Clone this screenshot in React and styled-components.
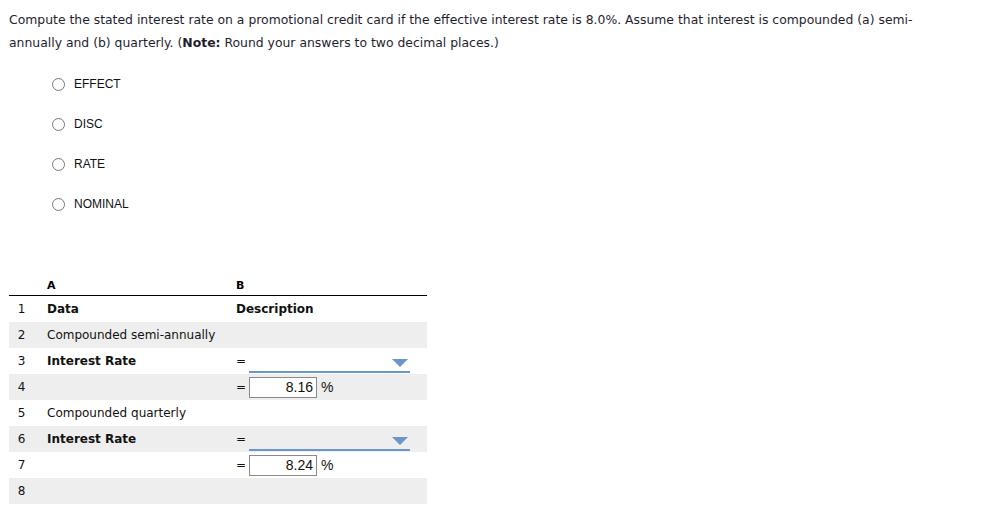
import React from 'react';
import styled, { createGlobalStyle } from 'styled-components';

const GlobalStyle = createGlobalStyle`
  html, body {
    margin: 0;
    padding: 0;
    background: #fff;
  }
  body {
    font-family: "DejaVu Sans", Verdana, sans-serif;
    font-size: 13px;
    color: #222;
  }
`;

const Page = styled.div`
  padding: 8px 9px;
  width: 980px;
  box-sizing: border-box;
`;

const Question = styled.p`
  margin: 0;
  max-width: 916px;
  font-size: 12.4px;
  line-height: 23px;
  color: #1e1e2e;
`;

const Options = styled.div`
  display: flex;
  flex-direction: column;
  gap: 20px;
  padding: 20px 0 0 43px;
`;

const Option = styled.label`
  display: flex;
  align-items: center;
  gap: 9px;
  height: 20px;
  font-family: "Liberation Sans", Arial, sans-serif;
  font-size: 12px;
  color: #111;
`;

const Radio = styled.span`
  width: 11px;
  height: 11px;
  border: 1px solid #767676;
  border-radius: 50%;
  background: #fff;
`;

const Sheet = styled.div`
  margin-top: 61px;
  width: 418px;
  display: grid;
  grid-template-columns: 38px 189px 1fr;
`;

const HeadCell = styled.div`
  height: 20px;
  display: flex;
  align-items: center;
  font-weight: bold;
  font-size: 11px;
  border-bottom: 1px solid #000;
  color: #000;
`;

const Row = styled.div`
  display: contents;
  & > div {
    background: ${p => (p.$shade ? '#eeeeee' : '#fff')};
  }
`;

const Cell = styled.div`
  height: 26px;
  display: flex;
  align-items: center;
  font-weight: ${p => (p.$bold ? 'bold' : 'normal')};
  font-size: 12px;
  color: #111;
`;

const Num = styled(Cell)`
  justify-content: center;
  padding-right: 13px;
  font-size: 12px;
`;

const Eq = styled.span`
  width: 13px;
  font-size: 12px;
  font-weight: normal;
`;

const Select = styled.div`
  width: 161px;
  height: 16px;
  margin-top: 7px;
  border-bottom: 2px solid #6a96c8;
  display: flex;
  justify-content: flex-end;
  align-items: center;
  padding-right: 2px;
  box-sizing: border-box;
`;

const Arrow = () => (
  <svg width="16" height="9" viewBox="0 0 16 9">
    <polygon points="0,0 16,0 8,8" fill="#6a96c8" />
  </svg>
);

const Input = styled.div`
  width: 68px;
  height: 21px;
  box-sizing: border-box;
  border: 1px solid #8a8a8a;
  background: #fff;
  display: flex;
  align-items: center;
  justify-content: flex-end;
  padding-right: 3px;
  font-family: "Liberation Sans", Arial, sans-serif;
  font-size: 14px;
  color: #111;
`;

const Unit = styled.span`
  margin-left: 4px;
  font-family: "Liberation Sans", Arial, sans-serif;
  font-size: 14px;
`;

const options = ['EFFECT', 'DISC', 'RATE', 'NOMINAL'];

const rows = [
  { n: 1, a: 'Data', b: 'Description', bold: true },
  { n: 2, a: 'Compounded semi-annually' },
  { n: 3, a: 'Interest Rate', bold: true, select: true },
  { n: 4, value: '8.16' },
  { n: 5, a: 'Compounded quarterly' },
  { n: 6, a: 'Interest Rate', bold: true, select: true },
  { n: 7, value: '8.24' },
  { n: 8 },
];

export default function App() {
  return (
    <Page>
      <GlobalStyle />
      <Question>
        Compute the stated interest rate on a promotional credit card if the effective interest rate is 8.0%. Assume that interest is compounded (a) semi-annually and (b) quarterly. (<b>Note:</b> Round your answers to two decimal places.)
      </Question>
      <Options>
        {options.map(o => (
          <Option key={o}>
            <Radio />
            {o}
          </Option>
        ))}
      </Options>
      <Sheet>
        <HeadCell />
        <HeadCell>A</HeadCell>
        <HeadCell>B</HeadCell>
        {rows.map(r => (
          <Row key={r.n} $shade={r.n % 2 === 0}>
            <Num>{r.n}</Num>
            <Cell $bold={r.bold}>{r.a}</Cell>
            <Cell $bold={r.bold}>
              {r.b}
              {r.select && (
                <>
                  <Eq>=</Eq>
                  <Select>
                    <Arrow />
                  </Select>
                </>
              )}
              {r.value && (
                <>
                  <Eq>=</Eq>
                  <Input>{r.value}</Input>
                  <Unit>%</Unit>
                </>
              )}
            </Cell>
          </Row>
        ))}
      </Sheet>
    </Page>
  );
}
